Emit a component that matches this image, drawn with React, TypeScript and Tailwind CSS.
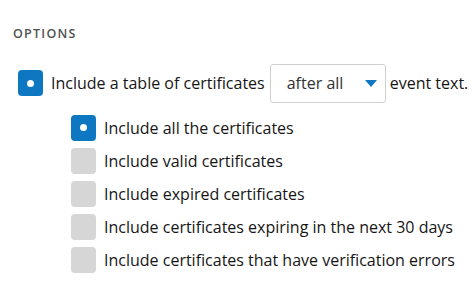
import { useState } from "react";

const subOptions = [
  "Include all the certificates",
  "Include valid certificates",
  "Include expired certificates",
  "Include certificates expiring in the next 30 days",
  "Include certificates that have verification errors",
];

function Radio({ checked }: { checked: boolean }) {
  return (
    <span
      className={
        checked
          ? "flex h-[26px] w-[25px] shrink-0 items-center justify-center rounded-[4px] bg-[#0e77c2]"
          : "flex h-[26px] w-[25px] shrink-0 items-center justify-center rounded-[4px] bg-[#d6d6d6]"
      }
    >
      {checked && <span className="h-[7px] w-[7px] rounded-full bg-white" />}
    </span>
  );
}

export default function App() {
  const [selected, setSelected] = useState(0);

  return (
    <div className="h-[284px] w-[474px] bg-white font-['Open_Sans',sans-serif] text-[#161616]">
      <div className="pl-[13px] pt-[25px] text-[12.5px] font-semibold tracking-[0.1em] text-[#525252]">
        OPTIONS
      </div>
      <div className="mt-[20px] flex items-center pl-[18px] text-[16px]">
        <Radio checked />
        <span className="ml-[8px]">Include a table of certificates</span>
        <div className="ml-[5px] flex h-[39px] w-[116px] items-center justify-between rounded-[3px] border border-[#cfcfcf] pl-[16px] pr-[8px] text-[#333]">
          <span>after all</span>
          <svg width="12" height="7" viewBox="0 0 12 7">
            <path d="M0 0h12L6 7z" fill="#0e77c2" />
          </svg>
        </div>
        <span className="ml-[4px]">event text.</span>
      </div>
      <div className="mt-[12px] flex flex-col gap-[7px] pl-[71px] text-[16px]">
        {subOptions.map((label, i) => (
          <div
            key={label}
            className="flex cursor-pointer items-center"
            onClick={() => setSelected(i)}
          >
            <Radio checked={selected === i} />
            <span className="ml-[8px]">{label}</span>
          </div>
        ))}
      </div>
    </div>
  );
}
